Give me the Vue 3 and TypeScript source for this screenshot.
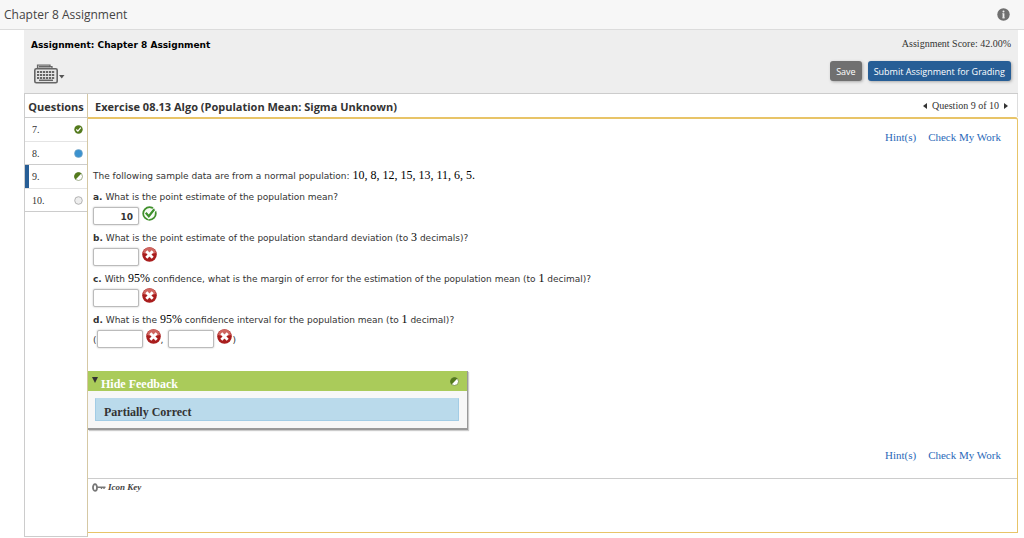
<script setup lang="ts">
import { ref } from 'vue'

type Status = 'correct' | 'saved' | 'partial' | 'empty'
interface Item { n: number; status: Status }
interface Blank { label: string; value: string; ok: boolean }
interface Part { letter: string; text: string[]; interval: boolean; blanks: Blank[] }

const items: Item[] = [
  { n: 7, status: 'correct' },
  { n: 8, status: 'saved' },
  { n: 9, status: 'partial' },
  { n: 10, status: 'empty' },
]
const current = 9

// Odd entries of `text` are numbers set in the math face.
const parts = ref<Part[]>([
  { letter: 'a', text: ['What is the point estimate of the population mean?'], interval: false, blanks: [{ label: 'Point estimate of the mean', value: '10', ok: true }] },
  { letter: 'b', text: ['What is the point estimate of the population standard deviation (to ', '3', ' decimals)?'], interval: false, blanks: [{ label: 'Standard deviation', value: '', ok: false }] },
  { letter: 'c', text: ['With ', '95%', ' confidence, what is the margin of error for the estimation of the population mean (to ', '1', ' decimal)?'], interval: false, blanks: [{ label: 'Margin of error', value: '', ok: false }] },
  { letter: 'd', text: ['What is the ', '95%', ' confidence interval for the population mean (to ', '1', ' decimal)?'], interval: true, blanks: [{ label: 'Lower limit', value: '', ok: false }, { label: 'Upper limit', value: '', ok: false }] },
])
</script>

<template>
  <div class="page">
    <header class="top">
      <span>Chapter 8 Assignment</span>
      <button class="info" type="button" aria-label="Information">
        <svg width="13" height="13" viewBox="0 0 13 13"><circle cx="6.5" cy="6.5" r="6.2" fill="#707070" /><path d="M6.5 5.3v5" stroke="#f0f0f0" stroke-width="1.8" /><path d="M5.3 5.6h1.2M5.2 9.8h2.8" stroke="#d8d8d8" stroke-width=".7" /><circle cx="6.5" cy="3.4" r="1" fill="#f0f0f0" /></svg>
      </button>
    </header>

    <div class="shell">
      <section class="summary">
        <div class="left">
          <h1>Assignment: Chapter 8 Assignment</h1>
          <button class="keyboard" type="button" aria-label="Keyboard tools">
            <svg width="32" height="20" viewBox="0 0 32 20">
              <path d="M3.5 4V1h12.500v1.500h2V4" fill="#bbb" stroke="#666" stroke-width="1.2" />
              <path d="M5 2.7h11" stroke="#555" />
              <rect x="0.8" y="4.7" width="22.4" height="14" rx="1.5" fill="#e6e6e6" stroke="#666" stroke-width="1.6" />
              <path d="M3 8h18M3 11h18M3 14h18" stroke="#666" stroke-width="2.2" stroke-dasharray="2.2 .8" />
              <path d="M5 16.3h14" stroke="#666" stroke-width="1.5" />
              <path d="M25 11h5.500l-2.750 3.500z" fill="#555" />
            </svg>
          </button>
        </div>
        <div class="right">
          <span class="score">Assignment Score: 42.00%</span>
          <div class="actions">
            <button class="btn save" type="button">Save</button>
            <button class="btn submit" type="button">Submit Assignment for Grading</button>
          </div>
        </div>
      </section>

      <div class="columns">
        <nav class="side" aria-label="Questions">
          <h2>Questions</h2>
          <ul>
            <li v-for="item in items" :key="item.n" :class="{ current: item.n === current }">
              <a href="#">
                <span>{{ item.n }}.</span>
                <svg width="9" height="9" viewBox="0 0 9 9">
                  <template v-if="item.status === 'correct'"><circle cx="4.5" cy="4.5" r="4.2" fill="#547a1d" /><path d="M2.3 4.5l1.6 1.6 2.9-3.500" stroke="#fff" stroke-width="1.3" fill="none" /></template>
                  <circle v-else-if="item.status === 'saved'" cx="4.5" cy="4.5" r="4" fill="#3b92cf" stroke="#7fa9c4" stroke-width=".6" />
                  <template v-else-if="item.status === 'partial'"><circle cx="4.5" cy="4.5" r="4" fill="#fff" stroke="#8a9a72" stroke-width=".8" /><path d="M1.6 7.4A4.1 4.1 0 0 1 7.4 1.6z" fill="#547a1d" /></template>
                  <circle v-else cx="4.5" cy="4.5" r="3.8" fill="#eee" stroke="#aaa" stroke-width=".9" />
                </svg>
              </a>
            </li>
          </ul>
        </nav>

        <main class="main">
          <div class="title">
            <h2>Exercise 08.13 Algo (Population Mean: Sigma Unknown)</h2>
            <div class="pager">
              <button type="button" aria-label="Previous question"><svg width="4" height="6" viewBox="0 0 4 6"><path d="M4 0v6L0 3z" fill="#333" /></svg></button>
              <span>Question 9 of 10</span>
              <button type="button" aria-label="Next question"><svg width="4" height="6" viewBox="0 0 4 6"><path d="M0 0v6l4-3z" fill="#333" /></svg></button>
            </div>
          </div>

          <div class="frame">
            <div class="links"><a href="#">Hint(s)</a><a href="#">Check My Work</a></div>

            <div class="question">
              <p class="intro">The following sample data are from a normal population: <span class="math">10, 8, 12, 15, 13, 11, 6, 5.</span></p>
              <div v-for="part in parts" :key="part.letter">
                <p class="prompt"><b>{{ part.letter }}.</b>&nbsp;<span v-for="(t, i) in part.text" :key="i" :class="{ math: i % 2 === 1 }">{{ t }}</span></p>
                <div class="answers">
                  <span v-if="part.interval" class="mark">(</span>
                  <template v-for="(blank, i) in part.blanks" :key="i">
                    <span v-if="i > 0" class="mark comma">,</span>
                    <input v-model="blank.value" type="text" :aria-label="blank.label" />
                    <svg v-if="blank.ok" class="grade" width="15" height="15" viewBox="0 0 15 15"><circle cx="7.5" cy="7.5" r="6.3" fill="#f5faf2" stroke="#40902c" stroke-width="1.8" /><path d="M3.8 7l3 3.600L13 2.800" stroke="#fff" stroke-width="4" fill="none" /><path d="M3.8 6.8l3 3.500 5.500-7" stroke="#3d912b" stroke-width="2.2" fill="none" /></svg>
                    <svg v-else class="grade" width="15" height="15" viewBox="0 0 15 15"><circle cx="7.5" cy="7.5" r="7.3" fill="#a91d1d" /><path d="M1 6a6.600 6.600 0 0 1 13 0Q7 8 1 6" fill="#cf6660" /><path d="M4.3 4.3l6.400 6.400M10.700 4.300l-6.400 6.400" stroke="#fff" stroke-width="2.8" /></svg>
                  </template>
                  <span v-if="part.interval" class="mark">)</span>
                </div>
              </div>
            </div>

            <section class="feedback">
              <button class="toggle" type="button">
                <svg class="arrow" width="6" height="6" viewBox="0 0 6 6"><path d="M0 0h6L3 6z" fill="#333" /></svg>
                <span>Hide Feedback</span>
                <svg class="half" width="9" height="9" viewBox="0 0 9 9"><circle cx="4.5" cy="4.5" r="4" fill="#fff" stroke="#6c8a3a" stroke-width=".8" /><path d="M1.6 7.4A4.1 4.1 0 0 1 7.4 1.6z" fill="#547a1d" /></svg>
              </button>
              <div class="result">Partially Correct</div>
            </section>

            <div class="links lower"><a href="#">Hint(s)</a><a href="#">Check My Work</a></div>

            <footer>
              <a href="#">
                <svg width="14" height="9" viewBox="0 0 14 9"><ellipse cx="3" cy="4.5" rx="2" ry="3.4" fill="none" stroke="#777" stroke-width="1.8" /><path d="M5 4.3h8.500M9.500 4.500v1.600M12 4.500v1.600" stroke="#777" stroke-width="1.4" /></svg>
                <span>Icon Key</span>
              </a>
            </footer>
          </div>
        </main>
      </div>
    </div>
  </div>
</template>

<style>
body { margin: 0; background: #fff; }
</style>

<style scoped>
* { box-sizing: border-box; }
h1, h2, p, ul { margin: 0; padding: 0; }
a { text-decoration: none; }
svg { display: block; flex: none; }
button { padding: 0; border: 0; background: none; }
.page { color: #333; font-family: "DejaVu Sans", sans-serif; font-size: 9px; }
.top { display: flex; align-items: center; justify-content: space-between; height: 30px; padding: 0 14px 0 4px; border-bottom: 1px solid #dcdcdc; background: #f7f7f7; font: 12px "Open Sans", sans-serif; color: #444; }
.shell { margin: 0 6px 0 24px; }
.summary { display: flex; justify-content: space-between; height: 63px; padding: 8px 7px 0; background: #eee; }
h1 { color: #000; font-size: 9px; line-height: 14px; font-weight: bold; }
.keyboard { display: block; margin: 12px 0 0 3px; }
.right { display: flex; flex-direction: column; align-items: flex-end; }
.score { line-height: 12px; font-family: "Liberation Serif", serif; font-size: 10px; }
.actions { display: flex; gap: 6px; margin-top: 11px; }
.btn { height: 20px; padding: 0 6px; border-radius: 3px; color: #fff; font: 9px "Open Sans", sans-serif; box-shadow: 1px 1px 3px #aaa; }
.save { background: #707070; }
.submit { background: #275e96; }
.columns { display: flex; align-items: flex-start; border-top: 1px solid #ccc; }
.side { flex: none; width: 64px; min-height: 443px; border: solid #ccc; border-width: 0 1px 1px; border-right-color: #d5c8a4; }
.side h2 { height: 24px; border-bottom: 1px solid #ccc; text-align: center; }
h2 { font: bold 11px/25px "Open Sans", sans-serif; color: #333; }
ul { list-style: none; }
li a { display: flex; align-items: center; justify-content: space-between; height: 23px; padding: 0 4px 0 7px; color: #333; font: 10px "Liberation Serif", serif; }
li:nth-child(even) a { height: 22px; }
li { border-bottom: 1px solid #e4e4e4; }
li:nth-child(even) { border-color: #ccc; }
li.current a { border-left: 4px solid #275e96; padding-left: 3px; }
.main { flex: 1; min-width: 0; }
.title { display: flex; justify-content: space-between; height: 23px; padding: 0 9px 0 7px; border-right: 1px solid #ddd; }
.pager { display: flex; align-items: center; gap: 5px; font: 10px "Liberation Serif", serif; }
.frame { height: 416px; border: 1px solid #e8c468; border-width: 2px 1px 1px 0; border-top-right-radius: 3px; }
.links { display: flex; justify-content: flex-end; gap: 12px; height: 14px; margin: 11px 16px 0 0; font: 11px/14px "Liberation Serif", serif; }
.links a { color: #2a69b8; }
.question { padding: 23px 5px 0; }
.intro { line-height: 18px; padding-bottom: 3px; }
.prompt { height: 18px; line-height: 18px; white-space: nowrap; }
.prompt span { white-space: pre; }
.math { color: #000; font-family: "Liberation Serif", serif; font-size: 12px; line-height: 1; }
.answers { display: flex; align-items: flex-start; height: 23px; }
input { width: 46px; height: 18px; margin-top: 1px; padding: 2px 5px 0 4px; border: 1px solid #bbb; border-radius: 2px; box-shadow: 0 0 2px #bbb; outline: 0; background: #fff; color: #333; text-align: right; font: bold 9px "DejaVu Sans", sans-serif; }
.grade { margin-left: 3px; }
.mark { padding-top: 5px; line-height: 12px; }
.comma { margin-right: 5px; }
.feedback { width: 380px; height: 59px; margin-top: 19px; background: #f7f7f7; border: solid #999; border-width: 0 1px 2px 0; box-shadow: 1px 1px 1px #ccc; }
.toggle { display: flex; align-items: flex-start; width: 100%; height: 20px; padding: 6px 8px 0 4px; background: #aacb5a; color: #fff; font: bold 12px/14px "Liberation Serif", serif; }
.toggle span { margin-left: 3px; }
.half { margin-left: auto; }
.result { height: 23px; margin: 7px 8px 0 7px; padding: 1px 8px 0; border: 1px solid #a2cce5; border-top-color: #badaeb; background: #badaeb; font: bold 12px/25px "Liberation Serif", serif; }
.lower { margin-top: 18px; }
footer { margin-top: 16px; padding: 3px 4px; border-top: 1px solid #ccc; line-height: 10px; }
footer a { display: flex; align-items: center; gap: 2px; color: #444; font: italic bold 9px/10px "Liberation Serif", serif; }
</style>
